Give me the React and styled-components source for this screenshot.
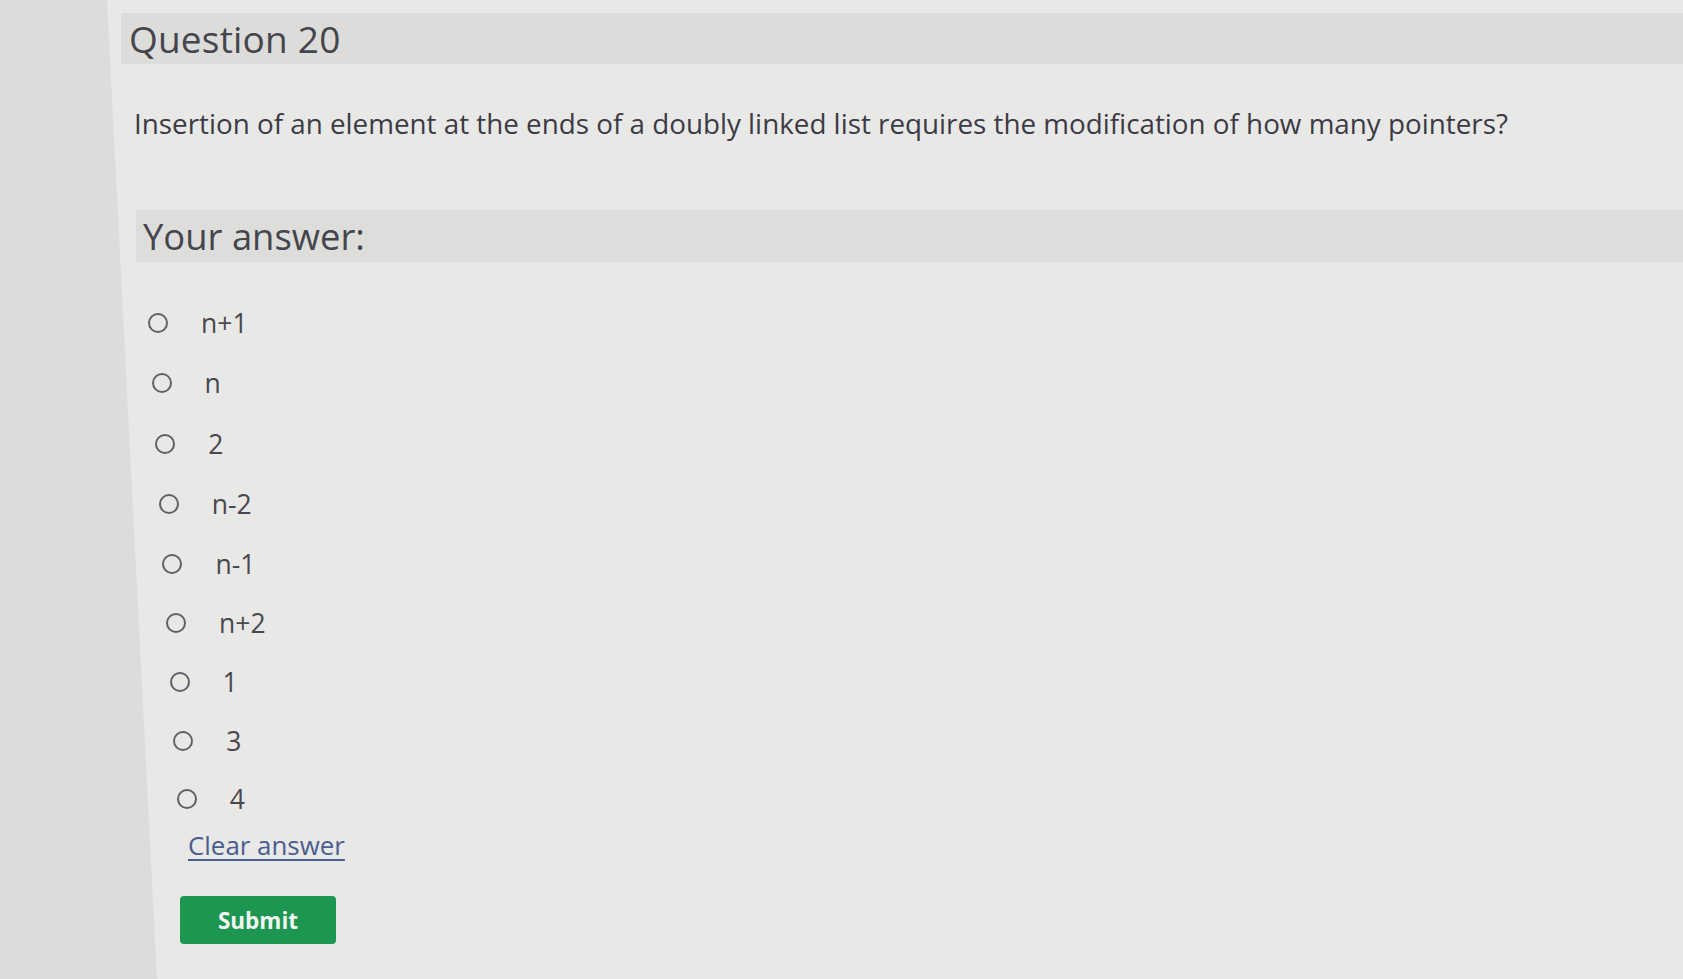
import React from 'react';
import styled, { createGlobalStyle } from 'styled-components';

const GlobalStyle = createGlobalStyle`
  html, body {
    margin: 0;
    padding: 0;
    background: #e8e8e6;
    font-family: "Open Sans", "Noto Sans", Arial, sans-serif;
  }
`;

const options = ['n+1', 'n', '2', 'n-2', 'n-1', 'n+2', '1', '3', '4'];

const Page = () => {
  return (
    <>
      <GlobalStyle />
      <Layout>
        <Sidebar />
        <Main>
          <HeaderBar>Question 20</HeaderBar>
          <QuestionText>
            Insertion of an element at the ends of a doubly linked list requires the modification of how many pointers?
          </QuestionText>
          <AnswerBar>Your answer:</AnswerBar>
          <OptionList>
            {options.map((opt, i) => (
              <Option key={opt} $indent={i * 3.6} $height={61 - i * 0.35}>
                <Radio />
                <OptionLabel>{opt}</OptionLabel>
              </Option>
            ))}
          </OptionList>
          <ClearLink href="#">Clear answer</ClearLink>
          <SubmitButton>Submit</SubmitButton>
        </Main>
      </Layout>
    </>
  );
}

const Layout = styled.div`
  display: flex;
  min-height: 100vh;
  overflow: hidden;
`;

const Sidebar = styled.div`
  width: 121px;
  flex-shrink: 0;
  position: relative;

  &::before {
    content: '';
    position: absolute;
    top: 0;
    left: 0;
    bottom: 0;
    width: 160px;
    background: #dcdcda;
    clip-path: polygon(0 0, 107px 0, 157px 100%, 0 100%);
    z-index: 0;
  }
`;

const Main = styled.div`
  flex: 1;
  position: relative;
  z-index: 1;
  padding-top: 13px;
  display: flex;
  flex-direction: column;
  align-items: flex-start;
  color: #3d3d43;
`;

const HeaderBar = styled.div`
  align-self: stretch;
  height: 51px;
  background: #dcdcda;
  display: flex;
  align-items: center;
  padding-left: 8px;
  font-size: 37px;
  color: #45454c;
  letter-spacing: 0.2px;
`;

const QuestionText = styled.div`
  margin: 40px 0 0 13px;
  font-size: 27.8px;
  line-height: 38px;
  color: #3c3b45;
`;

const AnswerBar = styled.div`
  align-self: stretch;
  margin: 68px 0 0 15px;
  height: 52px;
  background: #dddddb;
  display: flex;
  align-items: center;
  padding-left: 7px;
  font-size: 36.4px;
  color: #45454c;
`;

const OptionList = styled.div`
  margin-top: 30px;
  display: flex;
  flex-direction: column;
`;

const Option = styled.label`
  height: ${p => p.$height}px;
  display: flex;
  align-items: center;
  padding-left: ${p => 27 + p.$indent}px;
  cursor: pointer;
`;

const Radio = styled.span`
  width: 16px;
  height: 16px;
  border: 2px solid #606066;
  border-radius: 50%;
  flex-shrink: 0;
`;

const OptionLabel = styled.span`
  margin-left: 33px;
  font-size: 26.5px;
  color: #48484e;
`;

const ClearLink = styled.a`
  margin-left: 67px;
  font-size: 25.9px;
  line-height: 34px;
  color: #4b5d90;
  text-decoration: underline;
  text-underline-offset: 4px;
`;

const SubmitButton = styled.button`
  margin: 34px 0 0 59px;
  width: 156px;
  height: 48px;
  background: #1d9651;
  border: none;
  border-radius: 4px;
  color: #f2f5f2;
  font-family: "Open Sans", Arial, sans-serif;
  font-weight: 700;
  font-size: 22.5px;
  cursor: pointer;
`;

export default Page;
